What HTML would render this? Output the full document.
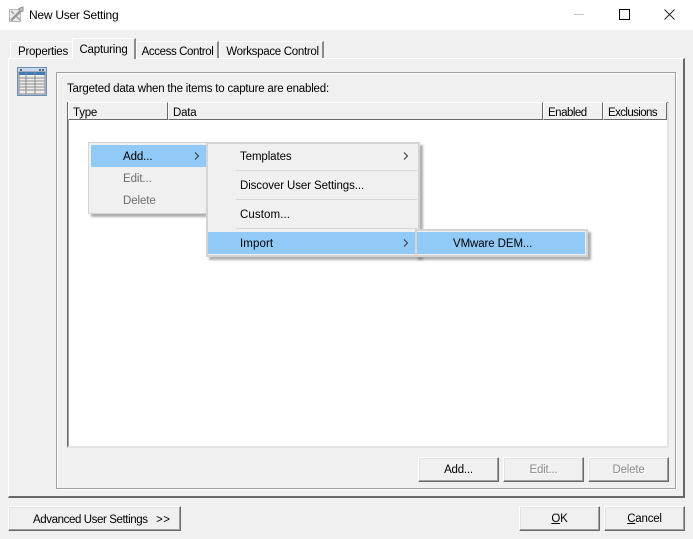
<!DOCTYPE html>
<html><head><meta charset="utf-8"><style>
html,body{margin:0;padding:0;width:693px;height:539px;overflow:hidden}
body{background:#f0f0f0;position:relative;font-family:"Liberation Sans",sans-serif;font-size:11.5px;letter-spacing:-.2px;color:#000}
div{position:absolute;box-sizing:border-box;white-space:nowrap}
.t{white-space:nowrap;line-height:15px;height:15px}
.m{letter-spacing:-.1px;margin-top:1px}
.btn{background:#f0f0f0;border:1px solid;border-color:#fff #696969 #696969 #fff;box-shadow:inset -1px -1px 0 #a0a0a0,inset 1px 1px 0 #e3e3e3;text-align:center;line-height:24px}
.dis{color:#8a8a8a;text-shadow:1px 1px 0 #fff}
.hd{top:102px;height:18px;background:#f0f0f0;border:1px solid;border-color:#fff #696969 #696969 #fff;line-height:20px;padding-left:4px;white-space:nowrap}
.menu{background:#f0f0f0;border:2px solid #d4d4d4;box-shadow:3px 3px 2px rgba(110,110,110,.55)}
.hl{background:#91c9f7}
.sep{height:1px;background:#d7d7d7}
.tab{background:#f0f0f0;border-top:1px solid #fff;border-left:1px solid #fff;border-right:2px solid #8a8a8a;text-align:center;line-height:17px;white-space:nowrap}
</style></head><body>
<div style="left:0;top:0;width:693px;height:30px;background:#fff"></div>
<svg style="position:absolute;left:8px;top:6px" width="17" height="17" viewBox="0 0 17 17"><rect x="1.5" y="3.5" width="11" height="12" fill="#ececec" stroke="#b5b5b5"/><path d="M3 14.5L12 5.5" stroke="#999" stroke-width="2.5"/><path d="M11 2.5l4-1.500 0 4-3 1z" fill="#c4c4c4" stroke="#8f8f8f"/><path d="M3 5l3 3M8 10l4 4" stroke="#a0a0a0" stroke-width="1.5"/></svg>
<div class="t" style="left:29px;top:8px;font-size:12px;letter-spacing:-.25px">New User Setting</div>
<div style="left:574px;top:14px;width:10px;height:1px;background:#c4c4c4"></div>
<div style="left:619px;top:9px;width:11px;height:11px;border:1px solid #000"></div>
<svg style="position:absolute;left:664px;top:9px" width="11" height="11"><path d="M0.5 0.5L10.5 10.5M10.5 0.5L0.5 10.5" stroke="#222" fill="none"/></svg>

<!-- tab pane -->
<div style="left:8px;top:58px;width:677px;height:440px;border:1px solid;border-color:#fff #696969 #696969 #fff;border-width:1px 2px 2px 1px;background:#f0f0f0"></div>
<div class="tab" style="left:10px;top:41px;width:62px;height:18px;border-right:0;border-bottom:1px solid #fff;line-height:20px;padding-left:3px;letter-spacing:-.25px">Properties</div>
<div class="tab" style="left:72px;top:38px;width:64px;height:21px;line-height:23px;letter-spacing:-.2px">Capturing</div>
<div class="tab" style="left:136px;top:41px;width:83px;height:17px;line-height:20px;padding-left:1px;letter-spacing:-.4px">Access Control</div>
<div class="tab" style="left:219px;top:41px;width:105px;height:17px;line-height:20px;padding-left:3px;letter-spacing:-.3px">Workspace Control</div>

<!-- big icon -->
<svg style="position:absolute;left:17px;top:67px" width="30" height="29" viewBox="0 0 30 29"><rect x="0.5" y="0.5" width="29" height="28" fill="#c3d7ee" stroke="#6d8fb3"/><rect x="2" y="5" width="26" height="22" fill="#ededed" stroke="#8a8a8a"/><rect x="2" y="5" width="26" height="3" fill="#3f7cb5"/><path d="M2 11H28M2 14H28M2 17H28M2 20H28M2 23H28M9 5V27M18 5V27" stroke="#8a8a8a" stroke-width="1" fill="none"/><rect x="3" y="2" width="2" height="2" fill="#567"/><rect x="22" y="2" width="2" height="2" fill="#567"/><rect x="25" y="2" width="2" height="2" fill="#567"/></svg>

<!-- group -->
<div style="left:56px;top:72px;width:620px;height:417px;border:1px solid #a0a0a0;box-shadow:1px 1px 0 #fff,inset 1px 1px 0 #fff"></div>
<div class="t" style="left:67px;top:82px">Targeted data when the items to capture are enabled:</div>

<!-- list -->
<div style="left:67px;top:102px;width:602px;height:346px;background:#fff;border:1px solid;border-color:#696969 #e3e3e3 #e3e3e3 #696969;border-width:1px 2px 2px 1px;box-shadow:inset 1px 0 0 #a0a0a0"></div>
<div class="hd" style="left:68px;width:100px">Type</div>
<div class="hd" style="left:168px;width:375px">Data</div>
<div class="hd" style="left:543px;width:60px;letter-spacing:-.5px">Enabled</div>
<div class="hd" style="left:603px;width:64px;letter-spacing:-.6px">Exclusions</div>

<!-- menu 1 -->
<div class="menu" style="left:88px;top:142px;width:119px;height:72px;border-width:1px 0 1px 1px"></div>
<div class="hl" style="left:91px;top:145px;width:115px;height:22px"></div>
<div class="t m" style="left:123px;top:149px">Add...</div>
<svg style="position:absolute;left:194px;top:152px" width="6" height="8"><path d="M1 0.5L4.5 4L1 7.5" stroke="#333" fill="none"/></svg>
<div class="t m" style="left:123px;top:171px;color:#6d6d6d">Edit...</div>
<div class="t m" style="left:123px;top:193px;color:#6d6d6d">Delete</div>

<!-- menu 2 -->
<div class="menu" style="left:206px;top:142px;width:214px;height:115px"></div>
<div class="t m" style="left:240px;top:149px">Templates</div>
<svg style="position:absolute;left:403px;top:152px" width="6" height="8"><path d="M1 0.5L4.5 4L1 7.5" stroke="#333" fill="none"/></svg>
<div class="sep" style="left:236px;top:170px;width:181px"></div>
<div class="t m" style="left:240px;top:178px">Discover User Settings...</div>
<div class="sep" style="left:236px;top:199px;width:181px"></div>
<div class="t m" style="left:240px;top:207px;letter-spacing:.1px">Custom...</div>
<div class="sep" style="left:236px;top:228px;width:181px"></div>
<div class="hl" style="left:208px;top:232px;width:207px;height:22px"></div>
<div class="t m" style="left:240px;top:236px;letter-spacing:.1px">Import</div>
<svg style="position:absolute;left:403px;top:239px" width="6" height="8"><path d="M1 0.5L4.5 4L1 7.5" stroke="#333" fill="none"/></svg>

<!-- menu 3 -->
<div class="menu" style="left:415px;top:229px;width:173px;height:28px"></div>
<div class="hl" style="left:417px;top:232px;width:168px;height:22px"></div>
<div class="t m" style="left:453px;top:236px">VMware DEM...</div>

<!-- buttons -->
<div class="btn" style="left:418px;top:457px;width:81px;height:25px">Add...</div>
<div class="btn dis" style="left:503px;top:457px;width:81px;height:25px">Edit...</div>
<div class="btn dis" style="left:588px;top:457px;width:81px;height:25px">Delete</div>
<div class="btn" style="left:8px;top:506px;width:173px;height:25px"></div>
<div class="t" style="left:33px;top:513px;letter-spacing:-.4px">Advanced User Settings</div>
<div class="t" style="left:156px;top:513px;letter-spacing:.5px">&gt;&gt;</div>
<div class="btn" style="left:519px;top:506px;width:81px;height:25px"><u>O</u>K</div>
<div class="btn" style="left:604px;top:506px;width:81px;height:25px"><u>C</u>ancel</div>
</body></html>
